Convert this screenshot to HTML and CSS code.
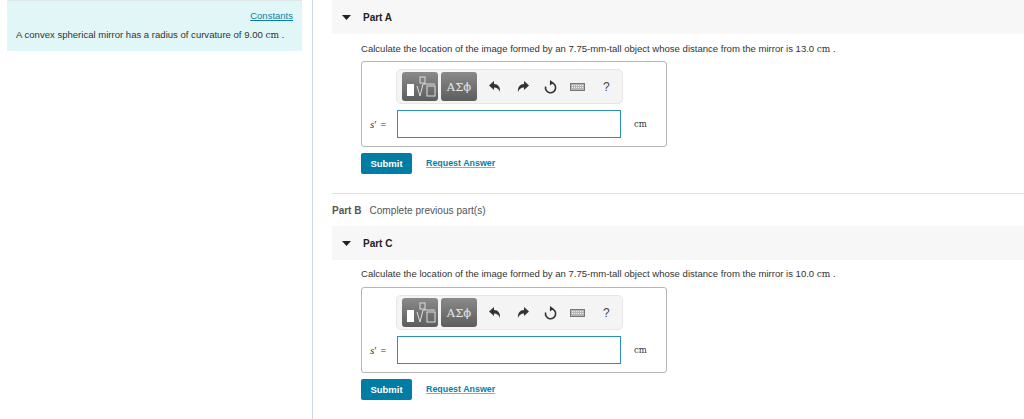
FILE: index.html
```html
<!DOCTYPE html>
<html lang="en">
<head>
<meta charset="utf-8">
<title>Spherical mirror</title>
<link rel="stylesheet" href="styles.css">
</head>
<body>
<div class="page">
  <aside class="side">
    <div class="info">
      <div class="const"><a href="#">Constants</a></div>
      <p class="prob">A convex spherical mirror has a radius of curvature of 9.00 <span class="u">cm</span> .</p>
    </div>
  </aside>
  <main class="main">
    <section class="part first">
      <div class="phead"><svg class="caret" width="9" height="5" viewBox="0 0 8 5" preserveAspectRatio="none"><path d="M0 0H8L4 5Z"/></svg><span>Part A</span></div>
      <p class="q">Calculate the location of the image formed by an 7.75-mm-tall object whose distance from the mirror is 13.0 <span class="u">cm</span> .</p>
      <div class="box">
        <div class="tools">
          <span class="tbtn t1"><svg width="34" height="24" viewBox="0 0 34 24"><rect x="4" y="9" width="7" height="12" fill="#fff"/><rect x="17" y="2" width="5" height="6" fill="none" stroke="#ddd"/><path d="M14 11l3 10 3-12h12" fill="none" stroke="#ddd"/><rect x="24" y="11" width="8" height="10" fill="none" stroke="#ddd"/></svg></span>
          <span class="tbtn t2">ΑΣϕ</span>
          <svg class="ic i1" width="12" height="12" viewBox="0 0 12 12"><path d="M0 4.500 5 0v3c4 0 6.500 3 6 8-1-3-3-4.500-6-4.500V9Z"/></svg>
          <svg class="ic i2" width="12" height="12" viewBox="0 0 12 12"><path d="M12 4.500 7 0v3c-4 0-6.500 3-6 8 1-3 3-4.500 6-4.500V9Z"/></svg>
          <svg class="ic i3" width="13" height="14" viewBox="0 0 12 13"><path d="M6.500 2.500A4.700 4.700 0 1 1 1.500 6" fill="none" stroke="#333" stroke-width="1.500"/><path d="M5.500 0 9 2.600 5.500 5Z"/></svg>
          <svg class="ic i4" width="15" height="8" viewBox="0 0 15 8"><rect x=".5" y=".5" width="14" height="7" fill="#b5b5b5" stroke="#777"/><path d="M2 2.500H13M2 4.500H13" stroke="#eee" stroke-dasharray="1 1"/></svg>
          <span class="help">?</span>
        </div>
        <div class="row">
          <span class="lbl"><i>s</i>′ <span class="eq">=</span></span>
          <span class="inp"></span>
          <span class="unit">cm</span>
        </div>
      </div>
      <div class="acts"><button class="sub">Submit</button><a class="req" href="#">Request Answer</a></div>
    </section>
    <section class="partb"><b>Part B</b><span>Complete previous part(s)</span></section>
    <section class="part">
      <div class="phead"><svg class="caret" width="9" height="5" viewBox="0 0 8 5" preserveAspectRatio="none"><path d="M0 0H8L4 5Z"/></svg><span>Part C</span></div>
      <p class="q">Calculate the location of the image formed by an 7.75-mm-tall object whose distance from the mirror is 10.0 <span class="u">cm</span> .</p>
      <div class="box">
        <div class="tools">
          <span class="tbtn t1"><svg width="34" height="24" viewBox="0 0 34 24"><rect x="4" y="9" width="7" height="12" fill="#fff"/><rect x="17" y="2" width="5" height="6" fill="none" stroke="#ddd"/><path d="M14 11l3 10 3-12h12" fill="none" stroke="#ddd"/><rect x="24" y="11" width="8" height="10" fill="none" stroke="#ddd"/></svg></span>
          <span class="tbtn t2">ΑΣϕ</span>
          <svg class="ic i1" width="12" height="12" viewBox="0 0 12 12"><path d="M0 4.500 5 0v3c4 0 6.500 3 6 8-1-3-3-4.500-6-4.500V9Z"/></svg>
          <svg class="ic i2" width="12" height="12" viewBox="0 0 12 12"><path d="M12 4.500 7 0v3c-4 0-6.500 3-6 8 1-3 3-4.500 6-4.500V9Z"/></svg>
          <svg class="ic i3" width="13" height="14" viewBox="0 0 12 13"><path d="M6.500 2.500A4.700 4.700 0 1 1 1.500 6" fill="none" stroke="#333" stroke-width="1.500"/><path d="M5.500 0 9 2.600 5.500 5Z"/></svg>
          <svg class="ic i4" width="15" height="8" viewBox="0 0 15 8"><rect x=".5" y=".5" width="14" height="7" fill="#b5b5b5" stroke="#777"/><path d="M2 2.500H13M2 4.500H13" stroke="#eee" stroke-dasharray="1 1"/></svg>
          <span class="help">?</span>
        </div>
        <div class="row">
          <span class="lbl"><i>s</i>′ <span class="eq">=</span></span>
          <span class="inp"></span>
          <span class="unit">cm</span>
        </div>
      </div>
      <div class="acts"><button class="sub">Submit</button><a class="req" href="#">Request Answer</a></div>
    </section>
  </main>
</div>
</body>
</html>
```
FILE: styles.css
```css
* { box-sizing: border-box; }
html, body { margin: 0; padding: 0; height: 100%; overflow: hidden; background: #fff; }
body { font-family: "Liberation Sans", Arial, sans-serif; color: #333; font-size: 9.500px; }
.page { display: flex; width: 1024px; height: 419px; }
.side { width: 313px; flex: none; padding-left: 7px; border-right: 1px solid #c9dcec; }
.info { width: 295px; height: 51px; background: #e1f6f6; border-top: 1px solid #dfe6e6; padding: 9px 9px 0 9px; }
.const { text-align: right; font-size: 9.500px; line-height: 12px; }
.const a { color: #0a80a8; text-decoration: underline; }
.prob { margin: 7px 0 0; line-height: 12px; font-size: 9.550px; color: #333; }
.u { font-family: "DejaVu Serif", "Liberation Serif", serif; font-size: 9px; }
.main { flex: 1; padding: 0 0 0 19px; min-width: 0; }
.phead { height: 34px; background: #f7f7f7; display: flex; align-items: center; padding-left: 10px; font-weight: bold; font-size: 10px; color: #222; }
.caret { fill: #222; margin-right: 12px; }
.q { margin: 8px 0 0 29px; line-height: 12px; font-size: 9.550px; color: #333; }
.first .q { margin-top: 9px; }
.box { margin: 7px 0 0 29px; width: 306px; height: 86px; border: 1px solid #b5b5b5; border-radius: 3px; padding: 7px 0 0 34px; }
.first .box { margin-top: 6px; }
.tools { width: 227px; height: 35px; background: #f4f4f4; border: 1px solid #e6e6e6; border-radius: 5px; display: flex; align-items: center; padding-left: 5px; }
.tbtn { height: 29px; border-radius: 3px; background: linear-gradient(#8a8a8a, #5d5d5d); color: #e8e8e8; display: flex; align-items: center; justify-content: center; }
.t1 { width: 36px; }
.t2 { width: 36px; margin-left: 3px; font-family: "DejaVu Serif", serif; font-size: 11.500px; white-space: nowrap; }
.ic { fill: #333; flex: none; }
.i1 { margin-left: 12px; }
.i2 { margin-left: 16px; }
.i3 { margin-left: 15px; }
.i4 { margin-left: 13px; }
.help { margin-left: 18px; font-size: 12px; color: #444; }
.row { display: flex; align-items: center; margin: 6px 0 0 -34px; height: 28px; }
.lbl { width: 35px; padding-left: 8px; font-family: "Liberation Serif", serif; font-size: 11px; white-space: nowrap; }
.eq { margin-left: 1px; font-size: 10px; }
.inp { width: 224px; height: 28px; border: 1px solid #2a90b4; background: #fff; }
.unit { margin-left: 13px; font-family: "DejaVu Serif", serif; font-size: 8.500px; }
.acts { display: flex; align-items: flex-start; margin: 6px 0 0 29px; height: 21px; }
.sub { width: 51px; height: 21px; border: 0; border-radius: 2px; background: #007da4; color: #fff; font: bold 9.500px "Liberation Sans", sans-serif; padding: 0; }
.req { margin: 4px 0 0 14px; color: #0a7da3; font-weight: bold; font-size: 8.900px; line-height: 12px; text-decoration: underline; text-decoration-color: #6cb8d0; }
.partb { margin-top: 19px; height: 33px; border-top: 1px solid #dde3e8; display: flex; align-items: center; font-size: 10px; color: #555; padding-top: 1px; }
.partb b { margin-right: 8px; color: #555; }
.partb span { font-size: 10.100px; }
```
